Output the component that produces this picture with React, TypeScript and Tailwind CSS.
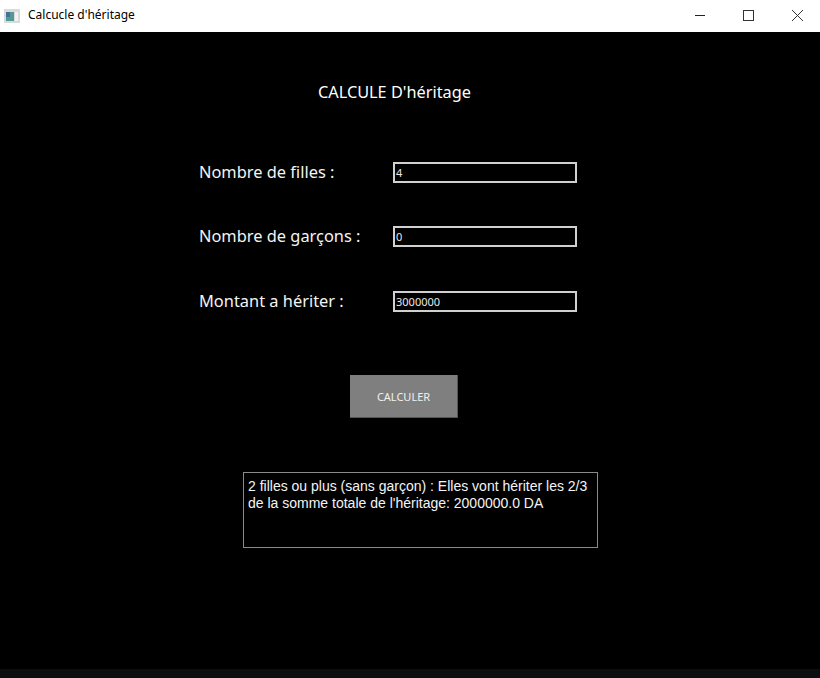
export default function App() {
  const rows = [
    { label: "Nombre de filles :", value: "4" },
    { label: "Nombre de garçons :", value: "0" },
    { label: "Montant a hériter :", value: "3000000" },
  ];
  return (
    <div className="w-[820px] h-[678px] flex flex-col bg-black overflow-hidden font-['Noto_Sans',sans-serif]">
      <div className="h-8 shrink-0 bg-white flex items-center text-black">
        <svg width="16" height="16" viewBox="0 0 16 16" className="ml-[4px] mt-[-1px]">
          <rect x="0" y="1" width="16" height="14" fill="#d8dadc" />
          <rect x="2" y="4" width="8" height="9" fill="#4f9a94" />
          <rect x="2" y="4" width="4" height="5" fill="#4a6f9f" />
          <rect x="11" y="4" width="3" height="9" fill="#f2f2f2" />
        </svg>
        <span className="ml-[8px] text-[12px] leading-none mt-[-2px]">Calcucle d'héritage</span>
        <div className="ml-auto flex items-center">
          <svg width="46" height="32" viewBox="0 0 46 32">
            <path d="M13 15.5H23" stroke="#222" strokeWidth="1" fill="none" />
          </svg>
          <svg width="46" height="32" viewBox="0 0 46 32">
            <rect x="15.5" y="10.5" width="10" height="10" stroke="#333" strokeWidth="1" fill="none" />
          </svg>
          <svg width="46" height="32" viewBox="0 0 46 32">
            <path d="M18 10L29 21M29 10L18 21" stroke="#333" strokeWidth="1" fill="none" />
          </svg>
        </div>
      </div>

      <div className="flex-1 flex flex-col">
        <div className="mt-[48px] h-6 ml-[318px] text-white text-[16.3px] leading-6">
          CALCULE D'héritage
        </div>

        <div className="mt-[58px] ml-[199px] flex flex-col">
          {rows.map((r, i) => (
            <div
              key={r.label}
              className={
                i === 0
                  ? "flex items-center h-[21px]"
                  : i === 1
                    ? "flex items-center h-[21px] mt-[43px]"
                    : "flex items-center h-[21px] mt-[44px]"
              }
            >
              <span className="w-[194px] text-[#f4f4f4] text-[16.4px] leading-none">{r.label}</span>
              <div className="w-[184px] h-[21px] border-2 border-[#d0d0d0] bg-black text-[#e8e8e8] text-[11px] leading-[17px] pl-px">
                {r.value}
              </div>
            </div>
          ))}
        </div>

        <div className="mt-[63px] ml-[350px] w-[108px] h-[43px] bg-[#7f7f7f] border-r border-b border-[#555] flex items-center justify-center text-[#f0f0f0] text-[11px] pt-[2px]">
          CALCULER
        </div>

        <div className="mt-[54px] ml-[243px] w-[355px] h-[76px] border border-[#8a8a8a] px-1 py-[5px] text-[#f4f4f4] text-[14px] leading-[17px] font-['Liberation_Sans',sans-serif]">
          <div>2 filles ou plus (sans garçon) : Elles vont hériter les 2/3</div>
          <div>de la somme totale de l'héritage: 2000000.0 DA</div>
        </div>
      </div>

      <div className="h-[9px] shrink-0 bg-[#0c0d0f]" />
    </div>
  );
}
